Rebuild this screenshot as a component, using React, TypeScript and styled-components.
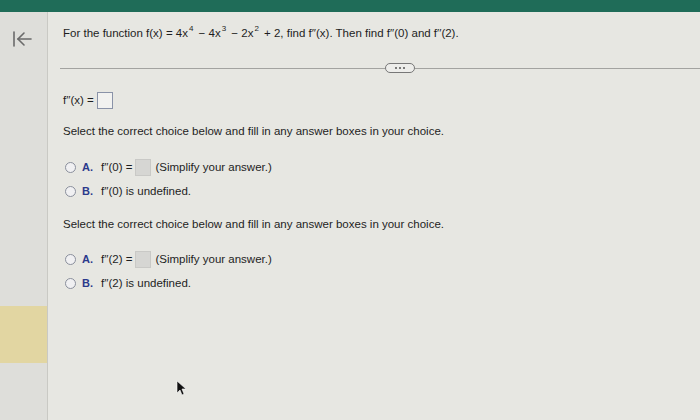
import React from "react";
import styled, { createGlobalStyle } from "styled-components";

const Global = createGlobalStyle`
  html, body { margin: 0; padding: 0; }
  body {
    width: 700px; height: 420px; overflow: hidden;
    font-family: "Liberation Sans", Arial, sans-serif;
    background: #e5e5e0;
  }
`;

const Page = styled.div`
  width: 700px; height: 420px;
  display: flex; flex-direction: column;
  position: relative;
`;

const TopBar = styled.div`
  height: 12px;
  background: #1f6c58;
  flex: none;
`;

const Body = styled.div`
  flex: 1;
  display: flex;
`;

const Sidebar = styled.div`
  width: 47px;
  flex: none;
  background: #dededa;
  border-right: 1px solid #c9c9c4;
  display: flex; flex-direction: column;
`;

const BackButton = styled.div`
  height: 54px;
  display: flex; align-items: center; justify-content: center;
  padding-right: 4px;
  color: #666;
`;

const SideSpacer = styled.div`
  height: 240px;
`;

const YellowTab = styled.div`
  height: 57px;
  background: #e2d6a2;
`;

const Main = styled.div`
  flex: 1;
  background: #e7e7e2;
  display: flex; flex-direction: column;
  padding-top: 13px;
`;

const Text = styled.div`
  font-size: 11.5px;
  color: #1e1e1e;
`;

const Question = styled(Text)`
  padding-left: 15px;
  height: 16px;
  line-height: 16px;
`;

const Sup = styled.sup`
  font-size: 8px;
  line-height: 0;
  position: relative;
  top: -1px;
  margin: 0 2px 0 1px;
`;

const DividerRow = styled.div`
  margin-top: 22px;
  margin-left: 12px;
  display: flex; align-items: center;
  height: 10px;
`;

const Line = styled.div<{ $w?: number }>`
  height: 1px;
  background: #a3a3a0;
  flex: ${p => (p.$w ? `0 0 ${p.$w}px` : "1")};
`;

const Pill = styled.div`
  width: 28px; height: 8px;
  border: 1px solid #777;
  border-radius: 5px;
  display: flex; align-items: center; justify-content: center;
  gap: 2px;
  background: #ededea;
  flex: none;
`;

const Dot = styled.span`
  width: 2px; height: 2px; background: #555; border-radius: 1px;
`;

const Content = styled.div`
  padding-left: 15px;
  display: flex; flex-direction: column;
`;

const Row = styled(Text)<{ $mt: number }>`
  margin-top: ${p => p.$mt}px;
  display: flex; align-items: center;
  height: 16px;
  white-space: pre;
`;

const AnswerBox = styled.span<{ $filled?: boolean }>`
  display: inline-block;
  width: 14px; height: 15px;
  border: 1px solid ${p => (p.$filled ? "#c9c9c6" : "#8a93a8")};
  background: ${p => (p.$filled ? "#d6d6d3" : "#f2f2f0")};
  margin: 0 4px 0 3px;
`;

const Option = styled(Text)<{ $mt: number }>`
  margin-top: ${p => p.$mt}px;
  display: flex; align-items: center;
  height: 16px;
  padding-left: 2px;
  white-space: pre;
`;

const Radio = styled.span`
  width: 11px; height: 11px;
  border-radius: 50%;
  border: 1px solid #8a8f9c;
  background: #f0f0f2;
  box-sizing: border-box;
  margin-right: 6px;
`;

const Letter = styled.span`
  color: #2b3a8c;
  font-weight: bold;
  width: 19px;
  font-size: 11px;
`;

const Cursor = styled.svg`
  position: absolute;
  left: 176px; top: 380px;
`;

function Opt({ mt, letter, children }: { mt: number; letter: string; children: React.ReactNode }) {
  return (
    <Option $mt={mt}>
      <Radio />
      <Letter>{letter}</Letter>
      {children}
    </Option>
  );
}

export default function App() {
  return (
    <Page>
      <Global />
      <TopBar />
      <Body>
        <Sidebar>
          <BackButton>
            <svg width="20" height="18" viewBox="0 0 20 18" fill="none" stroke="#6a6a6a" strokeWidth="1.6" strokeLinecap="round">
              <line x1="2" y1="2" x2="2" y2="16" />
              <line x1="6" y1="9" x2="19" y2="9" />
              <polyline points="12,3 6,9 12,15" />
            </svg>
          </BackButton>
          <SideSpacer />
          <YellowTab />
        </Sidebar>
        <Main>
          <Question>
            For the function f(x) = 4x<Sup>4</Sup> − 4x<Sup>3</Sup> − 2x<Sup>2</Sup> + 2, find f′′(x). Then find f′′(0) and f′′(2).
          </Question>
          <DividerRow>
            <Line $w={325} />
            <Pill><Dot /><Dot /><Dot /></Pill>
            <Line />
          </DividerRow>
          <Content>
            <Row $mt={19}>f′′(x) =<AnswerBox /></Row>
            <Row $mt={15}>Select the correct choice below and fill in any answer boxes in your choice.</Row>
            <Opt mt={20} letter="A.">f′′(0) =<AnswerBox $filled />(Simplify your answer.)</Opt>
            <Opt mt={8} letter="B.">f′′(0) is undefined.</Opt>
            <Row $mt={17}>Select the correct choice below and fill in any answer boxes in your choice.</Row>
            <Opt mt={19} letter="A.">f′′(2) =<AnswerBox $filled />(Simplify your answer.)</Opt>
            <Opt mt={8} letter="B.">f′′(2) is undefined.</Opt>
          </Content>
        </Main>
      </Body>
      <Cursor width="10" height="16" viewBox="0 0 10 16">
        <path d="M1 1 L1 13 L4 10 L6 15 L8 14 L6 9 L10 9 Z" fill="#111" stroke="#fff" strokeWidth="0.6" />
      </Cursor>
    </Page>
  );
}
